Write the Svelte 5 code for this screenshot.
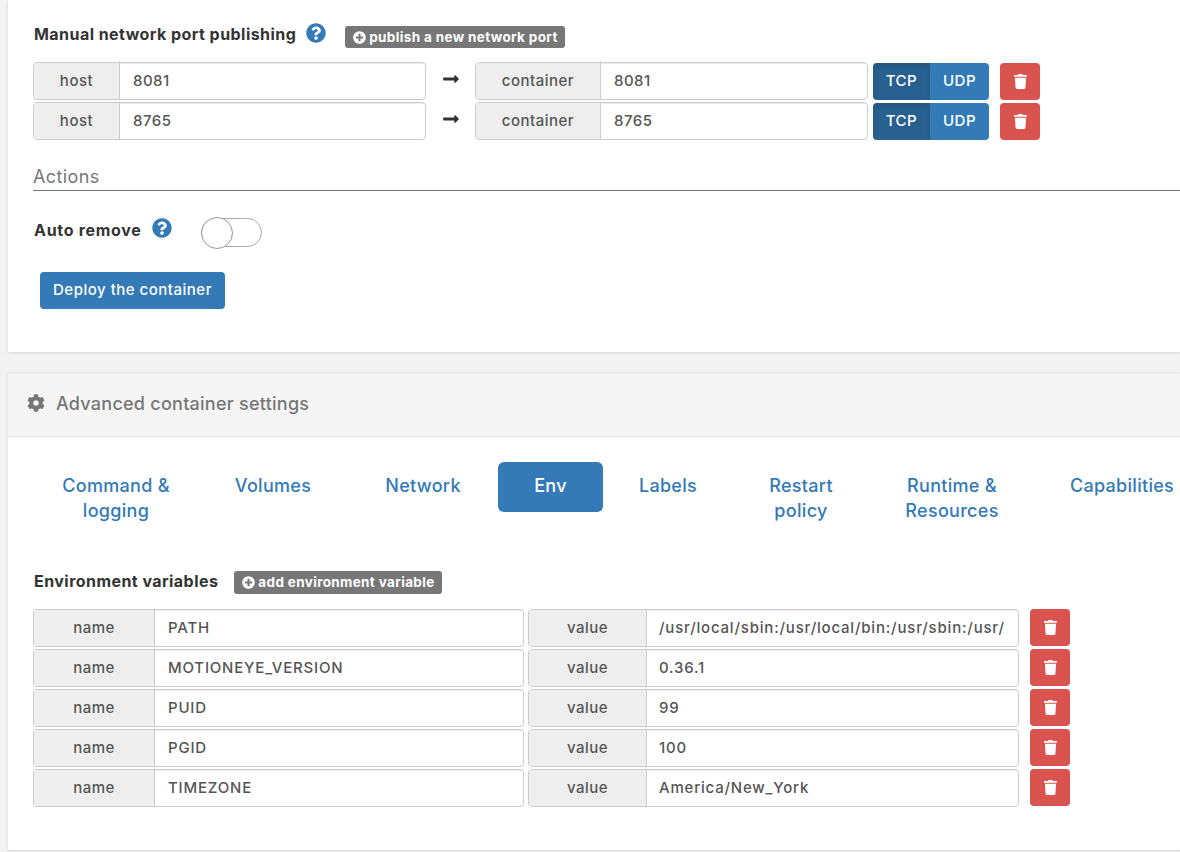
<script>
  const icons = {
    trash: ['0 0 448 512', 'M432 32H312l-9.4-18.7A24 24 0 0 0 281.1 0H166.8a23.72 23.72 0 0 0-21.4 13.3L136 32H16A16 16 0 0 0 0 48v32a16 16 0 0 0 16 16h416a16 16 0 0 0 16-16V48a16 16 0 0 0-16-16zM53.2 467a48 48 0 0 0 47.9 45h245.8a48 48 0 0 0 47.9-45L416 128H32z'],
    question: ['0 0 512 512', 'M504 256c0 136.997-111.043 248-248 248S8 392.997 8 256C8 119.083 119.043 8 256 8s248 111.083 248 248zM262.655 90c-54.497 0-89.255 22.957-116.549 63.758-3.536 5.286-2.353 12.415 2.715 16.258l34.699 26.31c5.205 3.947 12.621 3.008 16.665-2.122 17.864-22.658 30.113-35.797 57.303-35.797 20.429 0 45.698 13.148 45.698 32.958 0 14.976-12.363 22.667-32.534 33.976C247.128 238.528 216 254.941 216 296v4c0 6.627 5.373 12 12 12h56c6.627 0 12-5.373 12-12v-1.333c0-28.462 83.186-29.647 83.186-106.667 0-58.002-60.165-102-116.531-102zM256 338c-25.365 0-46 20.635-46 46 0 25.364 20.635 46 46 46s46-20.636 46-46c0-25.365-20.635-46-46-46z'],
    plus: ['0 0 512 512', 'M256 8C119 8 8 119 8 256s111 248 248 248 248-111 248-248S393 8 256 8zm144 276c0 6.6-5.4 12-12 12h-92v92c0 6.6-5.4 12-12 12h-56c-6.6 0-12-5.4-12-12v-92h-92c-6.6 0-12-5.4-12-12v-56c0-6.6 5.4-12 12-12h92v-92c0-6.6 5.4-12 12-12h56c6.6 0 12 5.4 12 12v92h92c6.6 0 12 5.4 12 12v56z'],
    cog: ['0 0 512 512', 'M487.4 315.7l-42.6-24.6c4.3-23.2 4.3-47 0-70.2l42.6-24.6c4.9-2.8 7.1-8.6 5.5-14-11.1-35.6-30-67.8-54.7-94.6-3.8-4.1-10-5.1-14.8-2.3L380.8 110c-17.9-15.4-38.5-27.3-60.8-35.1V25.8c0-5.6-3.9-10.5-9.4-11.7-36.7-8.2-74.3-7.8-109.2 0-5.5 1.2-9.4 6.1-9.4 11.7V75c-22.2 7.9-42.8 19.8-60.8 35.1L88.7 85.5c-4.9-2.8-11-1.9-14.8 2.3-24.7 26.7-43.6 58.9-54.7 94.6-1.7 5.4.6 11.2 5.5 14L67.3 221c-4.3 23.2-4.3 47 0 70.2l-42.6 24.6c-4.9 2.8-7.1 8.6-5.5 14 11.1 35.6 30 67.8 54.7 94.6 3.8 4.1 10 5.1 14.8 2.3l42.6-24.6c17.9 15.4 38.5 27.3 60.8 35.1v49.2c0 5.6 3.9 10.5 9.4 11.7 36.7 8.2 74.3 7.8 109.2 0 5.5-1.2 9.4-6.1 9.4-11.7v-49.2c22.2-7.9 42.8-19.8 60.8-35.1l42.6 24.6c4.9 2.8 11 1.9 14.8-2.3 24.7-26.7 43.6-58.9 54.7-94.6 1.5-5.5-.7-11.3-5.6-14.1zM256 336c-44.1 0-80-35.9-80-80s35.9-80 80-80 80 35.9 80 80-35.9 80-80 80z'],
    arrow: ['0 0 448 512', 'M313.941 216H12c-6.627 0-12 5.373-12 12v56c0 6.627 5.373 12 12 12h301.941v46.059c0 21.382 25.851 32.09 40.971 16.971l86.059-86.059c9.373-9.373 9.373-24.569 0-33.941l-86.059-86.059c-15.119-15.119-40.971-4.411-40.971 16.971V216z']
  };

  const ports = ['8081', '8765'];
  const tabs = [
    { label: 'Command & logging', width: 160 },
    { label: 'Volumes', width: 150 },
    { label: 'Network', width: 146 },
    { label: 'Env', width: 105, active: true },
    { label: 'Labels', width: 126 },
    { label: 'Restart policy', width: 136 },
    { label: 'Runtime & Resources', width: 162 },
    { label: 'Capabilities', width: 174 }
  ];
  const env = [
    ['PATH', '/usr/local/sbin:/usr/local/bin:/usr/sbin:/usr/'],
    ['MOTIONEYE_VERSION', '0.36.1'],
    ['PUID', '99'],
    ['PGID', '100'],
    ['TIMEZONE', 'America/New_York']
  ];
</script>

{#snippet icon(name, cls)}
  <svg class={cls} viewBox={icons[name][0]} fill="currentColor" aria-hidden="true"><path d={icons[name][1]} /></svg>
{/snippet}

<div class="page">
  <section class="card first">
    <div class="port-head">
      <span class="title">Manual network port publishing</span>
      {@render icon('question', 'help')}
      <span class="pill port-pill">{@render icon('plus', 'plus')}publish a new network port</span>
    </div>

    <div class="port-rows">
      {#each ports as port}
        <div class="port-row">
          <div class="group host">
            <span class="addon">host</span>
            <span class="input">{port}</span>
          </div>
          <div class="arrow-cell">{@render icon('arrow', 'arrow')}</div>
          <div class="group cont">
            <span class="addon">container</span>
            <span class="input">{port}</span>
          </div>
          <div class="proto">
            <span class="tcp">TCP</span>
            <span class="udp">UDP</span>
          </div>
          <button class="del">{@render icon('trash', 'trash')}</button>
        </div>
      {/each}
    </div>

    <h3 class="legend">Actions</h3>

    <div class="auto">
      <span class="title">Auto remove</span>
      {@render icon('question', 'help')}
      <span class="switch"><span class="knob"></span></span>
    </div>

    <button class="deploy">Deploy the container</button>
  </section>

  <section class="card second">
    <header class="card-head">
      {@render icon('cog', 'cog')}
      <span>Advanced container settings</span>
    </header>

    <nav class="tabs">
      {#each tabs as tab}
        <span class="tab" class:active={tab.active} style="width: {tab.width}px">{tab.label}</span>
      {/each}
    </nav>

    <div class="env-head">
      <span class="title">Environment variables</span>
      <span class="pill">{@render icon('plus', 'plus')}add environment variable</span>
    </div>

    <div class="env-rows">
      {#each env as row}
        <div class="env-row">
          <div class="group">
            <span class="addon name">name</span>
            <span class="input">{row[0]}</span>
          </div>
          <div class="group value-group">
            <span class="addon value">value</span>
            <span class="input">{row[1]}</span>
          </div>
          <button class="del">{@render icon('trash', 'trash')}</button>
        </div>
      {/each}
    </div>
  </section>
</div>

<style>
  :global(body) {
    background: #f2f2f2;
    font-family: Inter, "Noto Sans", sans-serif;
    color: #555;
  }

  .page {
    height: 852px;
    overflow: hidden;
    padding-left: 8px;
    box-sizing: border-box;
  }

  .card {
    background: #fff;
    box-shadow: 0 1px 3px rgba(0, 0, 0, 0.12);
  }

  .first {
    height: 352px;
    padding: 22px 0 0 25px;
    box-sizing: border-box;
  }

  .second {
    margin-top: 21px;
    height: 477px;
    border-top: 1px solid #e9e9e9;
    box-sizing: border-box;
  }

  .title {
    font-size: 16px;
    font-weight: 700;
    color: #333;
    letter-spacing: 0.45px;
  }

  .port-head .title,
  .env-head .title {
    margin-bottom: 2px;
  }

  .help {
    width: 20px;
    height: 20px;
    color: #337ab7;
    margin-left: 10px;
    position: relative;
    top: -2px;
  }

  .port-head {
    display: flex;
    align-items: center;
    height: 26px;
    margin-bottom: 14px;
    padding-left: 1px;
  }

  .pill {
    display: inline-flex;
    align-items: center;
    gap: 3px;
    height: 23px;
    padding: 0 7px 0 8px;
    box-sizing: border-box;
    background: #777;
    color: #fff;
    font-size: 13.5px;
    font-weight: 700;
    letter-spacing: 0.35px;
    border-radius: 3px;
  }

  .port-pill {
    height: 22px;
    margin-left: 19px;
    position: relative;
    top: 2px;
  }

  .plus {
    width: 13px;
    height: 13px;
  }

  .port-rows,
  .env-rows {
    display: flex;
    flex-direction: column;
  }

  .port-rows {
    gap: 2px;
  }

  .port-row {
    display: flex;
    align-items: stretch;
    height: 38px;
  }

  .group {
    display: flex;
    height: 38px;
    box-sizing: border-box;
    border: 1px solid #ccc;
    border-radius: 4px;
    overflow: hidden;
    font-size: 15px;
    font-weight: 500;
    letter-spacing: 0.5px;
    color: #555;
  }

  .host,
  .cont {
    width: 393px;
    flex: none;
  }

  .addon {
    display: flex;
    align-items: center;
    justify-content: center;
    flex: none;
    width: 86px;
    padding-bottom: 2px;
    background: #eee;
    border-right: 1px solid #ccc;
    box-sizing: border-box;
  }

  .cont .addon {
    width: 125px;
  }

  .input {
    flex: 1;
    display: flex;
    align-items: center;
    padding: 0 0 2px 13px;
    white-space: nowrap;
    box-shadow: inset 0 1px 1px rgba(0, 0, 0, 0.075);
    min-width: 0;
  }

  .arrow-cell {
    width: 49px;
    flex: none;
    display: flex;
    justify-content: center;
    align-items: center;
    padding-bottom: 5px;
    box-sizing: border-box;
    color: #333;
  }

  .arrow {
    width: 16px;
    height: 18px;
  }

  .proto {
    display: flex;
    margin-left: 5px;
    width: 116px;
    height: 37px;
    font-size: 15px;
    font-weight: 500;
    letter-spacing: 0.5px;
    color: #fff;
    border-radius: 4px;
    overflow: hidden;
    margin-top: 1px;
  }

  .proto span {
    display: flex;
    align-items: center;
    justify-content: center;
    padding-bottom: 2px;
    box-sizing: border-box;
  }

  .tcp {
    width: 57px;
    background: #286090;
    box-shadow: inset 0 3px 5px rgba(0, 0, 0, 0.125);
  }

  .udp {
    flex: 1;
    background: #337ab7;
  }

  .del {
    width: 40px;
    height: 37px;
    margin: 1px 0 0 11px;
    padding: 0;
    border: 0;
    border-radius: 4px;
    background: #d9534f;
    color: #fff;
    display: flex;
    align-items: center;
    justify-content: center;
  }

  .trash {
    width: 13px;
    height: 15px;
  }

  .legend {
    margin: 26px 0 0;
    padding-top: 1px;
    height: 23px;
    font-size: 18px;
    font-weight: 400;
    letter-spacing: 0.4px;
    color: #777;
    border-bottom: 1px solid #777;
    line-height: 20px;
  }

  .auto {
    display: flex;
    align-items: center;
    height: 30px;
    margin-top: 24px;
    padding-left: 1px;
  }

  .auto .title {
    letter-spacing: 0.7px;
  }

  .switch {
    display: block;
    width: 61px;
    height: 29px;
    margin-left: 29px;
    border: 1px solid #aaa;
    border-radius: 15px;
    box-sizing: border-box;
    position: relative;
    top: 2px;
  }

  .knob {
    position: absolute;
    left: -1px;
    top: -2px;
    width: 32px;
    height: 32px;
    box-sizing: border-box;
    background: #fff;
    border: 1px solid #999;
    border-radius: 50%;
  }

  .deploy {
    display: block;
    margin: 27px 0 0 7px;
    width: 185px;
    height: 37px;
    border: 0;
    border-radius: 4px;
    background: #337ab7;
    color: #fff;
    font-family: inherit;
    font-size: 15px;
    font-weight: 500;
    letter-spacing: 0.5px;
    padding: 0 0 2px;
  }

  .card-head {
    display: flex;
    align-items: center;
    height: 63px;
    padding: 0 0 4px 19px;
    box-sizing: border-box;
    background: #f5f5f5;
    border-bottom: 1px solid #e5e5e5;
    font-size: 18px;
    font-weight: 500;
    letter-spacing: 0.25px;
    color: #767676;
  }

  .cog {
    width: 18px;
    height: 18px;
    margin-right: 11px;
  }

  .tabs {
    display: flex;
    align-items: flex-start;
    gap: 2px;
    margin-top: 25px;
    padding-left: 28px;
    width: 1300px;
  }

  .tab {
    flex: none;
    height: 50px;
    box-sizing: border-box;
    padding: 11px 12px 0;
    text-align: center;
    font-size: 18px;
    letter-spacing: 0.3px;
    line-height: 25px;
    font-weight: 500;
    color: #337ab7;
    border-radius: 6px;
  }

  .tab.active {
    background: #337ab7;
    color: #fff;
  }

  .env-head {
    display: flex;
    align-items: center;
    gap: 16px;
    margin: 58px 0 15px 26px;
    height: 24px;
  }

  .env-rows {
    gap: 2px;
    padding-left: 25px;
  }

  .env-row {
    display: flex;
    height: 38px;
    gap: 4px;
  }

  .env-row .group {
    width: 491px;
    flex: none;
  }

  .env-row .input {
    letter-spacing: 0.8px;
  }

  .env-row .value-group .input {
    padding-left: 12px;
  }

  .env-row .addon.name {
    width: 121px;
  }

  .env-row .addon.value {
    width: 118px;
  }

  .env-row .del {
    margin: 0 0 0 7px;
  }
</style>
